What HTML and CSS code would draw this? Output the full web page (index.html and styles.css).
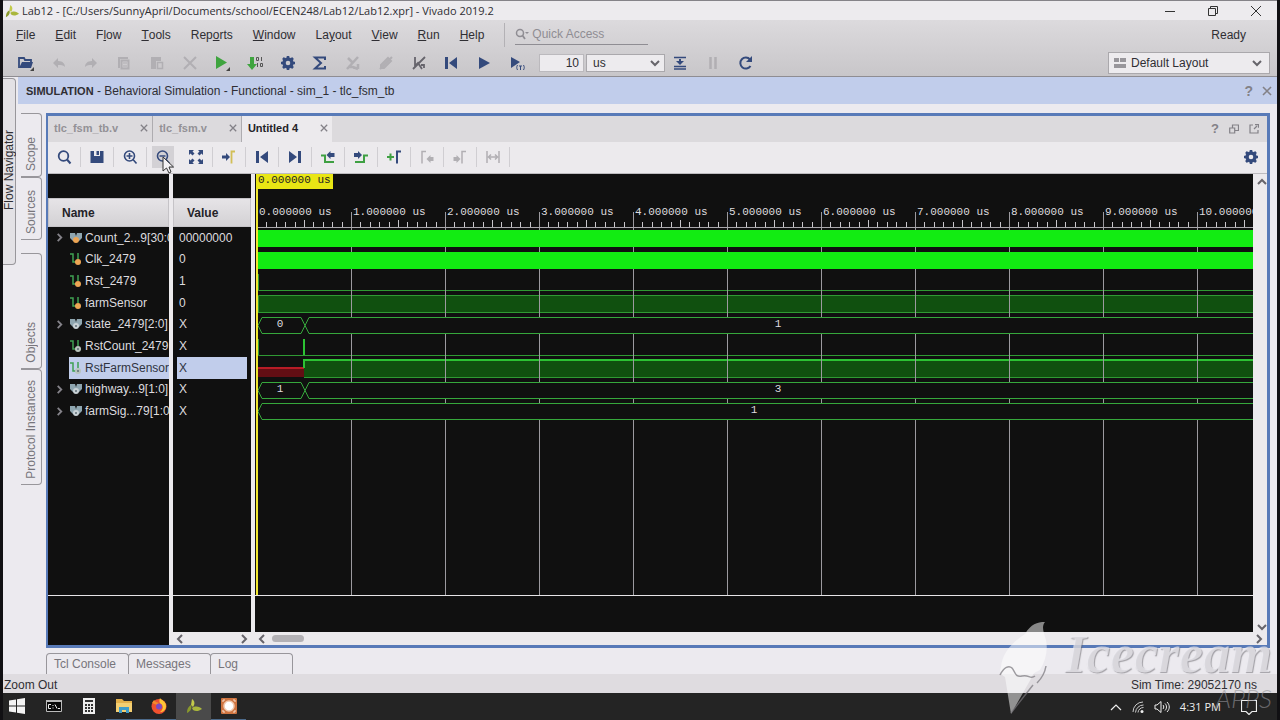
FILE: index.html
```html
<!DOCTYPE html>
<html lang="en">
<head>
    <meta charset="UTF-8">
    <meta name="viewport" content="width=device-width, initial-scale=1.0">
    <title>Lab12 - Vivado 2019.2</title>
    <link rel="stylesheet" href="styles.css">
</head>
<body>

    <!-- shared icons -->
    <svg class="defs" aria-hidden="true">
        <symbol id="vivado" viewBox="0 0 16 16">
            <path d="M6 1c3 2 3 5 1 8L5 7z" fill="#c3cb4a"/>
            <path d="M5 7c1 3 0 6-4 8 0-4 1-6 4-8z" fill="#8a9a2c"/>
            <path d="M6 10c4-3 8-1 10 1-3 2-6 3-9 1z" fill="#a9b63c"/>
        </symbol>
        <symbol id="chev-down" viewBox="0 0 10 10"><path d="M1 3l4 4 4-4" fill="none" stroke="currentColor" stroke-width="2"/></symbol>
        <symbol id="chev-up" viewBox="0 0 10 10"><path d="M1 7l4-4 4 4" fill="none" stroke="currentColor" stroke-width="2"/></symbol>
        <symbol id="chev-left" viewBox="0 0 10 10"><path d="M7 1L3 5l4 4" fill="none" stroke="currentColor" stroke-width="2"/></symbol>
        <symbol id="chev-right" viewBox="0 0 10 10"><path d="M3 1l4 4-4 4" fill="none" stroke="currentColor" stroke-width="2"/></symbol>
        <symbol id="close" viewBox="0 0 10 10"><path d="M1 1l8 8M9 1L1 9" fill="none" stroke="currentColor" stroke-width="1.6"/></symbol>
        <symbol id="gear" viewBox="0 0 16 16">
            <circle cx="8" cy="8" r="4" fill="none" stroke="currentColor" stroke-width="3.4"/>
            <path d="M8 1v3M8 12v3M1 8h3M12 8h3M3 3l2 2M11 11l2 2M13 3l-2 2M5 11l-2 2" stroke="currentColor" stroke-width="2.6"/>
        </symbol>
        <symbol id="bus-in" viewBox="0 0 12 12">
            <path d="M0 1h5l1 3 1-3h5v5L9 9H3L0 6z" fill="#8fa6b0"/>
            <circle cx="6" cy="8" r="3" fill="#eda554"/>
        </symbol>
        <symbol id="bus-reg" viewBox="0 0 12 12">
            <path d="M0 1h5l1 3 1-3h5v5L9 9H3L0 6z" fill="#8fa6b0"/>
            <circle cx="6" cy="8" r="3" fill="#c9d2d6"/><circle cx="6" cy="8" r="1" fill="#5d6c74"/>
        </symbol>
        <symbol id="wire-in" viewBox="0 0 12 12">
            <path d="M0 1h3v8h3M8 0v6" fill="none" stroke="#3fa052" stroke-width="1.5"/>
            <circle cx="8" cy="9" r="3" fill="#eda554"/>
        </symbol>
        <symbol id="wire-reg" viewBox="0 0 12 12">
            <path d="M0 1h3v8h3M8 0v6" fill="none" stroke="#3fa052" stroke-width="1.5"/>
            <circle cx="8" cy="9" r="3" fill="#b8c4bc"/><circle cx="8" cy="9" r="1" fill="#5d6c74"/>
        </symbol>
    </svg>

    <header class="titlebar">
        <svg class="logo"><use href="#vivado"/></svg>
        <span class="title">Lab12 - [C:/Users/SunnyApril/Documents/school/ECEN248/Lab12/Lab12.xpr] - Vivado 2019.2</span>
        <div class="window-buttons">
            <button aria-label="Minimize"><svg viewBox="0 0 10 10"><path d="M0 5.500h10" stroke="#333"/></svg></button>
            <button aria-label="Restore"><svg viewBox="0 0 10 10"><path d="M.5 2.500h7v7h-7zM2.500 2.500v-2h7v7h-2" fill="none" stroke="#333"/></svg></button>
            <button aria-label="Close"><svg viewBox="0 0 10 10"><path d="M0 0l10 10M10 0L0 10" stroke="#333"/></svg></button>
        </div>
    </header>

    <div class="top">
        <nav class="menu">
            <button><u>F</u>ile</button>
            <button><u>E</u>dit</button>
            <button>F<u>l</u>ow</button>
            <button><u>T</u>ools</button>
            <button>Rep<u>o</u>rts</button>
            <button><u>W</u>indow</button>
            <button>La<u>y</u>out</button>
            <button><u>V</u>iew</button>
            <button><u>R</u>un</button>
            <button><u>H</u>elp</button>
            <div class="quick">
                <label class="quick-box">
                    <svg class="quick-icon" viewBox="0 0 14 12"><circle cx="5" cy="5" r="3.500" fill="none" stroke="#8f8d93" stroke-width="1.500"/><path d="M7.500 7.500L10 11" stroke="#8f8d93" stroke-width="1.800"/><path d="M10 4h4l-2 2z" fill="#8f8d93"/></svg>
                    <input type="text" placeholder="Quick Access" aria-label="Quick Access">
                </label>
            </div>
            <span class="ready">Ready</span>
        </nav>

        <div class="toolbar">
            <div class="tools">
                <button aria-label="Open"><svg viewBox="0 0 16 16"><path d="M1 13V3h5l1 2h6v2" fill="none" stroke="currentColor" stroke-width="1.800"/><path d="M4 7h11l-2 6H1z" fill="currentColor"/><path d="M16 12v4h-4z" fill="#444"/></svg></button>
                <button class="off" aria-label="Undo"><svg viewBox="0 0 16 16"><path d="M7 3v3c5 0 7 3 7 6-2-2-4-2-7-2v3L2 8z" fill="currentColor"/></svg></button>
                <button class="off" aria-label="Redo"><svg viewBox="0 0 16 16"><path d="M9 3v3c-5 0-7 3-7 6 2-2 4-2 7-2v3l5-5z" fill="currentColor"/></svg></button>
                <button class="off" aria-label="Copy"><svg viewBox="0 0 16 16"><path d="M2 2h10v2H4v9H2z" fill="currentColor"/><path d="M5.500 5.500h7v8h-7z" fill="none" stroke="currentColor" stroke-width="2"/><path d="M7 8h4M7 11h4" stroke="currentColor"/></svg></button>
                <button class="off" aria-label="Paste"><svg viewBox="0 0 16 16"><path d="M2 2h10v4H7v8H2z" fill="currentColor"/><path d="M8.500 7.500h5v6h-5z" fill="none" stroke="currentColor" stroke-width="1.500"/></svg></button>
                <button class="off" aria-label="Delete"><svg viewBox="0 0 16 16"><path d="M2 2l12 12M14 2L2 14" stroke="currentColor" stroke-width="2"/></svg></button>
                <button aria-label="Run simulation"><svg viewBox="0 0 16 16"><path d="M2 1l11 6.500L2 14z" fill="#3fa43f"/><path d="M16 12v4h-4z" fill="#444"/></svg></button>
                <button aria-label="Generate bitstream"><svg viewBox="0 0 16 16"><path d="M3 2h4v7h3l-5 6-5-6h3z" fill="#3fa43f"/><path d="M9.500 2.500h2v3h-2zM14.500 2v4M10.500 8v4M13.500 8.500h2v3h-2z" fill="none" stroke="#555"/></svg></button>
                <button aria-label="Settings"><svg><use href="#gear"/></svg></button>
                <button aria-label="Report"><svg viewBox="0 0 16 16"><path d="M13 5V2.500H3L9 8l-6 5.500h10V11" fill="none" stroke="currentColor" stroke-width="2"/></svg></button>
                <button class="off" aria-label="Clear probes"><svg viewBox="0 0 16 16"><path d="M3 3l4 4M3 12h5l5 2M13 9v5M13 2L2 14" stroke="currentColor" stroke-width="2.500"/></svg></button>
                <button class="off" aria-label="Clear marks"><svg viewBox="0 0 16 16"><path d="M3 10l7-7 3 3-7 7H3zM14 2L2 14" fill="none" stroke="currentColor" stroke-width="2"/></svg></button>
                <button class="dim" aria-label="Cut selection"><svg viewBox="0 0 16 16"><path d="M4 2v9l3-3 4 6M14 2L2 14M10 10h3v3" fill="none" stroke="currentColor" stroke-width="1.800"/></svg></button>
                <button aria-label="Restart"><svg viewBox="0 0 16 16"><path d="M2 2h3v12H2zM14 2v12L6 8z" fill="currentColor"/></svg></button>
                <button aria-label="Run all"><svg viewBox="0 0 16 16"><path d="M3 2l11 6-11 6z" fill="currentColor"/></svg></button>
                <button aria-label="Run for time"><svg viewBox="0 0 16 16"><path d="M2 2l9 5-9 6z" fill="currentColor"/><path d="M8.500 10c-1 2-1 3 0 5M14.500 10c1 2 1 3 0 5M10 11h3M11.500 11v4" fill="none" stroke="currentColor"/></svg></button>
            </div>
            <input class="time" type="text" value="10" aria-label="Run time">
            <div class="select units">
                <select aria-label="Time unit"><option>us</option><option>ns</option></select>
                <svg><use href="#chev-down"/></svg>
            </div>
            <div class="tools run-tools">
                <button aria-label="Step"><svg viewBox="0 0 16 16"><path d="M2 2.500h12M2 11.500h12M2 14h12" stroke="currentColor" stroke-width="1.500"/><path d="M7 4h2v2h3L8 10 4 6h3z" fill="currentColor"/></svg></button>
                <button class="off" aria-label="Break"><svg viewBox="0 0 16 16"><path d="M5.500 2v12M10.500 2v12" stroke="currentColor" stroke-width="2.500"/></svg></button>
                <button aria-label="Relaunch"><svg viewBox="0 0 16 16"><path d="M12.500 11A5.500 5.500 0 1 1 12 4.500" fill="none" stroke="currentColor" stroke-width="2"/><path d="M14 1v6H8z" fill="currentColor"/></svg></button>
            </div>
            <div class="select layout">
                <svg class="layout-icon" viewBox="0 0 12 10"><path d="M0 0h5v4H0zM6 0h6v4H6zM0 6h12v4H0z" fill="#98969b"/></svg>
                <select aria-label="Layout"><option>Default Layout</option></select>
                <svg><use href="#chev-down"/></svg>
            </div>
        </div>
    </div>

    <div class="body">
        <div class="rail"><button class="side-tab flow-tab"><span>Flow Navigator</span></button></div>

        <main class="main">
            <div class="sim-bar">
                <span><b>SIMULATION</b> - Behavioral Simulation - Functional - sim_1 - tlc_fsm_tb</span>
                <div class="bar-buttons">
                    <button class="help" aria-label="Help">?</button>
                    <button aria-label="Close simulation"><svg><use href="#close"/></svg></button>
                </div>
            </div>

            <div class="work">
                <div class="side-tabs">
                    <button class="side-tab scope"><span>Scope</span></button>
                    <button class="side-tab sources"><span>Sources</span></button>
                    <button class="side-tab objects"><span>Objects</span></button>
                    <button class="side-tab protocol"><span>Protocol Instances</span></button>
                </div>

                <div class="center">
                    <section class="panel">
                        <div class="tabs">
                            <button class="tab">tlc_fsm_tb.v <svg><use href="#close"/></svg></button>
                            <button class="tab">tlc_fsm.v <svg><use href="#close"/></svg></button>
                            <button class="tab active">Untitled 4 <svg><use href="#close"/></svg></button>
                            <div class="tab-buttons">
                                <button class="help" aria-label="Help">?</button>
                                <button aria-label="Restore"><svg viewBox="0 0 10 10"><path d="M.7 4h5v5h-5zM3.500 4V1h6v5.500H6" fill="none" stroke="currentColor" stroke-width="1.200"/></svg></button>
                                <button aria-label="Float"><svg viewBox="0 0 10 10"><path d="M4 1H1v8h8V6M5 5l3-3M6 .7h3.500v3" fill="none" stroke="currentColor" stroke-width="1.200"/></svg></button>
                            </div>
                        </div>

                        <div class="wave-tools">
                            <button aria-label="Find"><svg viewBox="0 0 16 16"><circle cx="7.500" cy="7" r="4.800" fill="none" stroke="currentColor" stroke-width="1.800"/><path d="M11 10.500l3.500 4" stroke="currentColor" stroke-width="2"/></svg></button>
                            <button aria-label="Save"><svg viewBox="0 0 16 16"><path d="M1.500 2H5v5h6V2h3.500v12h-13z" fill="currentColor"/><path d="M7.500 2H10v4H7.500z" fill="currentColor"/></svg></button>
                            <button aria-label="Zoom In"><svg viewBox="0 0 16 16"><circle cx="7.500" cy="7" r="5" fill="none" stroke="currentColor" stroke-width="1.600"/><path d="M11 10.500l3.500 4M4.500 7h6M7.500 4v6" stroke="currentColor" stroke-width="1.600"/></svg></button>
                            <button aria-label="Zoom Out" class="hot">
                                <svg viewBox="0 0 16 16"><circle cx="7.500" cy="7" r="5" fill="none" stroke="currentColor" stroke-width="1.600"/><path d="M11 10.500l3.500 4M4.500 7h6" stroke="currentColor" stroke-width="1.600"/></svg>
                                <svg class="pointer" viewBox="0 0 12 18"><path d="M1 1v14l3.500-3 2.500 5 2-1-2-5h4.500z" fill="#f4f2f5" stroke="#333"/></svg>
                            </button>
                            <button aria-label="Zoom Fit"><svg viewBox="0 0 16 16"><path d="M1 1h5L4.500 2.500l2 2-2 2-2-2L1 6zM15 1v5l-1.500-1.500-2 2-2-2 2-2L10 1zM1 15v-5l1.500 1.500 2-2 2 2-2 2L6 15zM15 15h-5l1.500-1.500-2-2 2-2 2 2L15 10z" fill="currentColor"/></svg></button>
                            <button aria-label="Go to cursor"><svg viewBox="0 0 16 16"><path d="M1 6.500h4V4l4 4-4 4V9.500H1z" fill="currentColor"/><path d="M14 2.500h-3.500v12" fill="none" stroke="#d2bf57" stroke-width="1.800"/></svg></button>
                            <button aria-label="Go to start"><svg viewBox="0 0 16 16"><path d="M2 2h3v12H2zM14 2v12L6 8z" fill="currentColor"/></svg></button>
                            <button aria-label="Go to end"><svg viewBox="0 0 16 16"><path d="M11 2h3v12h-3zM2 2v12l8-6z" fill="currentColor"/></svg></button>
                            <button aria-label="Previous transition"><svg viewBox="0 0 16 16"><path d="M1 6.500h4v6.500h9" fill="none" stroke="#3fa043" stroke-width="2"/><path d="M14.500 4v4h-4v2L6.500 6l4-4v2z" fill="currentColor"/></svg></button>
                            <button aria-label="Next transition"><svg viewBox="0 0 16 16"><path d="M2 13h9V6.500h4" fill="none" stroke="#3fa043" stroke-width="2"/><path d="M1 4v4h4v2l4-4-4-4v2z" fill="currentColor"/></svg></button>
                            <button aria-label="Add marker"><svg viewBox="0 0 16 16"><path d="M1 8h7M4.500 4.500v7" stroke="#3fa043" stroke-width="2"/><path d="M15 2.500h-4v12" fill="none" stroke="currentColor" stroke-width="2"/></svg></button>
                            <button class="off" aria-label="Previous marker"><svg viewBox="0 0 16 16"><path d="M7 2.500H3v12" fill="none" stroke="currentColor" stroke-width="1.500"/><path d="M14.500 8v4h-3v2l-4-4 4-4v2z" fill="currentColor"/></svg></button>
                            <button class="off" aria-label="Next marker"><svg viewBox="0 0 16 16"><path d="M14 2.500h-4v12" fill="none" stroke="currentColor" stroke-width="1.500"/><path d="M1.500 8v4h3v2l4-4-4-4v2z" fill="currentColor"/></svg></button>
                            <button class="off" aria-label="Swap cursors"><svg viewBox="0 0 16 16"><path d="M2 2v12M14 2v12M3 8h10M6 5.500L3.500 8 6 10.500M10 5.500L12.500 8 10 10.500" fill="none" stroke="currentColor" stroke-width="1.500"/></svg></button>
                            <button class="wave-settings" aria-label="Waveform settings"><svg><use href="#gear"/></svg></button>
                        </div>

                        <div class="viewer">
                            <div class="col names">
                                <table>
                                    <thead><tr><th>Name</th></tr></thead>
                                    <tbody>
                                        <tr><td><svg class="arrow"><use href="#chev-right"/></svg><span class="sig"><svg><use href="#bus-in"/></svg>Count_2...9[30:0]</span></td></tr>
                                        <tr><td><span class="sig"><svg><use href="#wire-in"/></svg>Clk_2479</span></td></tr>
                                        <tr><td><span class="sig"><svg><use href="#wire-in"/></svg>Rst_2479</span></td></tr>
                                        <tr><td><span class="sig"><svg><use href="#wire-in"/></svg>farmSensor</span></td></tr>
                                        <tr><td><svg class="arrow"><use href="#chev-right"/></svg><span class="sig"><svg><use href="#bus-reg"/></svg>state_2479[2:0]</span></td></tr>
                                        <tr><td><span class="sig"><svg><use href="#wire-reg"/></svg>RstCount_2479</span></td></tr>
                                        <tr class="selected"><td><span class="sig"><svg><use href="#wire-reg"/></svg>RstFarmSensor</span></td></tr>
                                        <tr><td><svg class="arrow"><use href="#chev-right"/></svg><span class="sig"><svg><use href="#bus-reg"/></svg>highway...9[1:0]</span></td></tr>
                                        <tr><td><svg class="arrow"><use href="#chev-right"/></svg><span class="sig"><svg><use href="#bus-reg"/></svg>farmSig...79[1:0]</span></td></tr>
                                    </tbody>
                                </table>
                                <div class="filler"></div>
                                <div class="foot"></div>
                            </div>

                            <div class="col values">
                                <table>
                                    <thead><tr><th>Value</th></tr></thead>
                                    <tbody>
                                        <tr><td>00000000</td></tr>
                                        <tr><td>0</td></tr>
                                        <tr><td>1</td></tr>
                                        <tr><td>0</td></tr>
                                        <tr><td>X</td></tr>
                                        <tr><td>X</td></tr>
                                        <tr class="selected"><td>X</td></tr>
                                        <tr><td>X</td></tr>
                                        <tr><td>X</td></tr>
                                    </tbody>
                                </table>
                                <div class="filler"></div>
                                <div class="foot"></div>
                                <div class="hscroll"><svg><use href="#chev-left"/></svg><svg class="last"><use href="#chev-right"/></svg></div>
                            </div>

                            <div class="col wave">
                                <!-- 94 units of x are one microsecond, time zero is at x=2 -->
                                <svg class="canvas">
                                    <defs>
                                        <pattern id="grid" x="2" y="0" width="94" height="2000" patternUnits="userSpaceOnUse">
                                            <path d="M.5 38v2000" stroke="#9c9a9f"/>
                                            <path d="M9.500 48v6M19.500 48v6M28.500 48v6M38.500 48v6M47.500 46v8M56.500 48v6M66.500 48v6M75.500 48v6M85.500 48v6" stroke="#c9c7cc"/>
                                        </pattern>
                                    </defs>

                                    <rect x="2" y="38" width="100%" height="100%" fill="url(#grid)"/>
                                    <rect x="2" y="53" width="100%" height="1" fill="#aaa8ad"/>

                                    <g class="ruler">
                                        <text x="4" y="41">0.000000 us</text>
                                        <text x="98" y="41">1.000000 us</text>
                                        <text x="192" y="41">2.000000 us</text>
                                        <text x="286" y="41">3.000000 us</text>
                                        <text x="380" y="41">4.000000 us</text>
                                        <text x="474" y="41">5.000000 us</text>
                                        <text x="568" y="41">6.000000 us</text>
                                        <text x="662" y="41">7.000000 us</text>
                                        <text x="756" y="41">8.000000 us</text>
                                        <text x="850" y="41">9.000000 us</text>
                                        <text x="944" y="41">10.000000 us</text>
                                    </g>

                                    <!-- Count, Clk -->
                                    <rect class="clock" x="3" y="56" width="100%" height="17"/>
                                    <rect class="clock" x="3" y="78" width="100%" height="17"/>
                                    <!-- Rst -->
                                    <path class="line" d="M3.500 100v16.500H4000"/>
                                    <!-- farmSensor -->
                                    <rect class="high" x="3" y="122" width="100%" height="16"/>
                                    <path class="line" d="M3.500 138.500v-17H4000M3 138.500H4000"/>
                                    <!-- state -->
                                    <path class="bus" d="M3 151.500l4-8h39l4 8-4 8H7zM4000 143.500H54l-4 8 4 8H4000"/>
                                    <text class="val" x="25" y="153">0</text>
                                    <text class="val" x="52.4%" y="153">1</text>
                                    <!-- RstCount -->
                                    <path class="line" d="M3.500 165v16.500H4000"/>
                                    <path class="edge" d="M49 165v16"/>
                                    <!-- RstFarmSensor -->
                                    <rect x="3" y="193" width="46" height="10" fill="#620e14"/>
                                    <rect x="3" y="193" width="46" height="2" fill="#b71c26"/>
                                    <rect class="high" x="49" y="186" width="100%" height="17"/>
                                    <path class="line" d="M49 203.500H4000"/>
                                    <path class="edge" d="M49 194v-8H4000"/>
                                    <!-- highway, farmSig -->
                                    <path class="bus" d="M3 216.500l4-8h39l4 8-4 8H7zM4000 208.500H54l-4 8 4 8H4000"/>
                                    <text class="val" x="25" y="218">1</text>
                                    <text class="val" x="52.4%" y="218">3</text>
                                    <path class="bus" d="M4000 229.500H7l-4 8 4 8H4000"/>
                                    <text class="val" x="50%" y="239">1</text>

                                    <!-- gridlines run over the filled levels -->
                                    <rect x="2" y="96" width="100%" height="47" fill="url(#grid)"/>
                                    <rect x="2" y="160" width="100%" height="48" fill="url(#grid)"/>

                                    <!-- main cursor -->
                                    <rect x="1" y="0" width="2" height="100%" fill="#f1e62f"/>
                                    <rect x="1" y="0" width="77" height="15" fill="#e9e614"/>
                                    <text class="flag" x="3" y="9">0.000000 us</text>
                                </svg>
                                <div class="foot"></div>
                                <div class="hscroll">
                                    <svg><use href="#chev-left"/></svg>
                                    <span class="thumb"></span>
                                    <svg class="last"><use href="#chev-right"/></svg>
                                </div>
                            </div>
                            <div class="vscroll"><svg><use href="#chev-up"/></svg><svg><use href="#chev-down"/></svg></div>
                        </div>
                    </section>

                    <div class="bottom-tabs">
                        <button>Tcl Console</button>
                        <button>Messages</button>
                        <button>Log</button>
                    </div>
                </div>
            </div>
        </main>
    </div>

    <div class="status"><span>Zoom Out</span><span class="sim-time">Sim Time: 29052170 ns</span></div>

    <footer class="taskbar">
        <button aria-label="Start"><svg viewBox="0 0 16 16"><path d="M0 2.500l7-1v6H0zM8 1.300L16 0v7.500H8zM0 8.500h7v6l-7-1zM8 8.500h8V16l-8-1.300z" fill="#f3f3f3"/></svg></button>
        <button aria-label="Command Prompt"><svg viewBox="0 0 16 16"><path d="M.5 2.500h15v11H.5z" fill="#090909" stroke="#bbb"/><path d="M0 2h16v2H0z" fill="#bbb"/><path d="M5 6.500H2.500v4H5M7 7v1M7 9.500v1M9 6.500l2 4M12 10.500h2" fill="none" stroke="#eee"/></svg></button>
        <button aria-label="Calculator"><svg viewBox="0 0 16 16"><path d="M2 0h12v16H2z" fill="#eee"/><path d="M4 2h8v2H4z" fill="#333"/><path d="M4 7h8M4 10h8M4 13h8" stroke="#333" stroke-width="1.800" stroke-dasharray="2 1"/></svg></button>
        <button class="open" aria-label="File Explorer"><svg viewBox="0 0 16 16"><path d="M0 1h6l2 2h8v11H0z" fill="#e3b04b"/><path d="M0 5h16v9H0z" fill="#f4cf72"/><path d="M3 15V9h10v6h-3v-3H6v3z" fill="#3f9cc9"/></svg></button>
        <button class="open" aria-label="Firefox"><svg viewBox="0 0 16 16"><circle cx="8" cy="8.500" r="7.500" fill="#f0512e"/><path d="M9 0c1 2 6 3 6 8 0 4-3 6-6 6 3-2 4-6 1-8-2-1-2-4-1-6z" fill="#fbc536"/><path d="M1 5l2-3 2 2 3 1-2 2z" fill="#f58a2b"/><circle cx="8" cy="8.500" r="3" fill="#7d4bc0"/></svg></button>
        <button class="current" aria-label="Vivado"><svg><use href="#vivado"/></svg></button>
        <button class="open" aria-label="Screen Recorder"><svg viewBox="0 0 16 16"><rect width="16" height="16" rx="1" fill="#cf7440"/><circle cx="8" cy="8" r="5" fill="#fff" stroke="#f0c9b0" stroke-width="1.500"/><path d="M2 4V2h2M12 2h2v2M14 12v2h-2M4 14H2v-2" fill="none" stroke="#f5dccb"/></svg></button>
        <div class="tray">
            <svg viewBox="0 0 12 12"><path d="M1 9l5-5 5 5" fill="none" stroke="#eee" stroke-width="1.200"/></svg>
            <svg viewBox="0 0 12 12"><path d="M1 11A10 10 0 0 1 11 1M3.500 11.500A8 8 0 0 1 11.500 4M6 11.500A5.500 5.500 0 0 1 11.500 6.500" fill="none" stroke="#ccc"/><circle cx="10" cy="10.500" r="1.500" fill="#eee"/></svg>
            <svg class="volume" viewBox="0 0 16 12"><path d="M1 4h2l4-3.500v11L3 8H1zM9 4c1 1 1 3 0 4M11 2.500c2 2 2 5 0 7M13 1c3 3 3 7 0 10" fill="none" stroke="#eee"/></svg>
            <time>4:31 PM</time>
            <svg class="notes" viewBox="0 0 16 16"><path d="M.5 1.500h15v11H11l-3 3-3-3H.5z" fill="none" stroke="#eee" stroke-width="1.200"/></svg>
        </div>
    </footer>

    <div class="watermark">
        <svg viewBox="0 0 48 92"><path d="M26 12C32 2 38 0 46 0c-4 5-1 11 1 18 2 10 0 20-6 30-4 2-7 3-8 7L12 92 6 55c-4-2-6-5-4-10 1-13 10-24 24-33z" fill="#fff" fill-opacity=".5"/><path d="M1 53c4-8 9-10 12-7s3 10 10 8 8 4 13 0M38 61c5-5 8-11 9-17M34 63L12 91" fill="none" stroke="#77757a" stroke-opacity=".7" stroke-width="1.500"/></svg>
        <span class="brand">Icecream</span>
        <span class="apps">APPS</span>
    </div>

</body>
</html>
```

FILE: styles.css
```css
* {
    box-sizing: border-box;
}

body {
    display: flex;
    flex-direction: column;
    height: 100vh;
    margin: 0;
    padding: 0 3px;
    overflow: hidden;
    background: #111013;
    color: #2f2e33;
    font-family: "Liberation Sans", Arial, sans-serif;
    font-size: 12px;
    line-height: 16px;
}

button {
    display: flex;
    align-items: center;
    justify-content: center;
    padding: 0;
    border: none;
    background: none;
    color: inherit;
    font: inherit;
    white-space: nowrap;
}

input, select {
    min-width: 0;
    padding: 0;
    border: none;
    background: none;
    color: inherit;
    font: inherit;
    appearance: none;
}

svg {
    display: block;
    flex: none;
}

.defs {
    display: none;
}

/* Title bar */
.titlebar {
    display: flex;
    align-items: center;
    height: 20px;
    padding-left: 2px;
    border-top: 1px solid #858388;
    background: #edebee;
    font-family: "Open Sans", "Noto Sans", sans-serif;
    font-size: 11px;
}

.logo {
    width: 14px;
    height: 14px;
    margin-right: 3px;
}

.window-buttons {
    display: flex;
    margin-left: auto;
}

.window-buttons button {
    width: 43px;
    height: 16px;
}

.window-buttons svg {
    width: 10px;
    height: 10px;
}

/* Menu and main toolbar */
.top {
    border-bottom: 1px solid #8f8d92;
    background: linear-gradient(#dcdadd, #c8c6c9);
}

.menu {
    display: flex;
    align-items: center;
    gap: 20px;
    height: 30px;
    padding: 0 31px 0 13px;
}

.quick {
    height: 24px;
    padding-left: 10px;
    border-left: 1px solid #b3b1b5;
}

.quick-box {
    display: flex;
    align-items: center;
    gap: 3px;
    width: 133px;
    height: 22px;
    border-bottom: 1px solid #8f8d93;
}

.quick-icon {
    width: 14px;
    height: 12px;
}

.quick input {
    width: 100px;
}

.quick input::placeholder {
    color: #8f8d93;
    opacity: 1;
}

.ready {
    margin-left: auto;
}

.toolbar {
    display: flex;
    align-items: center;
    height: 26px;
    padding: 0 7px 0 11px;
}

.tools {
    display: flex;
    justify-content: space-between;
    width: 515px;
    color: #344a7c;
}

.tools button {
    width: 24px;
    height: 24px;
}

.tools svg {
    width: 16px;
    height: 16px;
}

.tools .off {
    color: #b1afb3;
}

.tools .dim {
    color: #66646c;
}

.time {
    width: 45px;
    height: 18px;
    margin-left: 10px;
    padding: 0 4px;
    border: 1px solid #bbb9bd;
    background: #edebee;
    text-align: right;
}

.select {
    display: flex;
    align-items: center;
    border: 1px solid #aaa8ac;
    background: #edebee;
}

.select select {
    flex: 1;
}

.select svg {
    width: 10px;
    height: 10px;
    color: #66646a;
}

.units {
    width: 79px;
    height: 18px;
    margin-left: 2px;
    padding: 0 4px 0 6px;
}

.run-tools {
    width: 90px;
    margin-left: 3px;
}

.layout {
    gap: 5px;
    width: 162px;
    height: 22px;
    margin-left: auto;
    padding: 0 7px 0 5px;
}

.select .layout-icon {
    width: 12px;
}

/* Body */
.body {
    display: flex;
    flex: 1;
    min-height: 0;
    background: #eceaef;
}

.rail {
    width: 15px;
    padding-top: 1px;
}

.side-tab {
    align-items: flex-end;
    padding-bottom: 5px;
    border: 1px solid #98969b;
    border-left: none;
    border-radius: 0 4px 4px 0;
    color: #77757b;
}

.side-tab span {
    writing-mode: vertical-rl;
    transform: rotate(180deg);
}

.flow-tab {
    width: 13px;
    height: 187px;
    padding-bottom: 54px;
    background: #e3e1e5;
    color: #2f2e33;
}

.main {
    display: flex;
    flex: 1;
    flex-direction: column;
    min-width: 0;
}

.sim-bar {
    display: flex;
    align-items: center;
    justify-content: space-between;
    height: 27px;
    padding: 0 5px 0 8px;
    background: #c1cdeb;
}

.sim-bar b {
    font-size: 11px;
}

.bar-buttons, .tab-buttons {
    display: flex;
    align-items: center;
    gap: 9px;
    color: #838187;
}

.bar-buttons svg, .tab-buttons svg {
    width: 10px;
    height: 10px;
}

.help {
    font-size: 14px;
    font-weight: bold;
}

.work {
    display: flex;
    flex: 1;
    min-height: 0;
    padding: 9px 7px 0 3px;
}

.side-tabs {
    display: flex;
    flex-direction: column;
    width: 25px;
}

.side-tabs .side-tab {
    width: 21px;
}

.scope {
    height: 64px;
}

.sources {
    height: 63px;
    margin-bottom: 13px;
}

.objects {
    height: 116px;
}

.protocol {
    height: 116px;
}

.center {
    display: flex;
    flex: 1;
    flex-direction: column;
    min-width: 0;
}

.panel {
    display: flex;
    flex: 1;
    flex-direction: column;
    min-height: 0;
    border: 3px solid #587ab8;
    border-left-width: 2px;
}

/* File tabs */
.tabs {
    display: flex;
    height: 26px;
    background: #dcdadd;
}

.tab {
    gap: 22px;
    padding: 0 4px 2px 6px;
    border-right: 1px solid #aeacb0;
    color: #939196;
    font-size: 11px;
    font-weight: bold;
}

.tab svg {
    width: 8px;
    height: 8px;
    color: #838187;
}

.tab.active {
    border: none;
    background: #eceaed;
    color: #242328;
}

.tab-buttons {
    gap: 10px;
    margin-left: auto;
    padding-right: 8px;
}

.tab-buttons .help {
    font-size: 13px;
}

/* Wave toolbar */
.wave-tools {
    display: flex;
    align-items: center;
    height: 32px;
    padding-bottom: 2px;
    border-bottom: 1px solid #bdbbbf;
    background: #eceaed;
    color: #344a7c;
}

.wave-tools button {
    position: relative;
    width: 33px;
    height: 20px;
    border-right: 1px solid #d0ced2;
}

.wave-tools svg {
    width: 16px;
    height: 16px;
}

.wave-tools .off {
    color: #b1afb3;
}

.wave-tools .hot {
    height: 22px;
    border: 5px solid transparent;
    border-width: 0 6px 0 5px;
    background: #d3d1d5;
    background-clip: padding-box;
    box-shadow: inset 0 0 0 0 #aaa8ad;
}

.wave-tools .pointer {
    position: absolute;
    top: 10px;
    left: 10px;
    width: 12px;
    height: 18px;
    z-index: 1;
}

.wave-tools .wave-settings {
    margin-left: auto;
    border: none;
}

/* Waveform viewer */
.viewer {
    display: flex;
    flex: 1;
    gap: 4px;
    min-height: 0;
    background: #eceaed;
}

.col {
    display: flex;
    flex-direction: column;
    background: #101010;
    color: #dddbdf;
}

.names {
    width: 121px;
    overflow: hidden;
}

.values {
    width: 78px;
}

table, thead, th, td {
    display: block;
    padding: 0;
}

thead {
    padding-top: 24px;
}

tr {
    display: block;
}

th {
    height: 29px;
    padding-left: 13px;
    border: 1px solid #c5c3c7;
    background: linear-gradient(#e6e4e7, #d3d1d4);
    color: #242328;
    line-height: 28px;
    text-align: left;
}

tbody {
    display: grid;
    grid-template-rows: repeat(9, 1fr);
    height: 195px;
}

td {
    display: flex;
    align-items: center;
    height: 100%;
    white-space: nowrap;
}

.names td {
    justify-content: flex-end;
    padding-left: 7px;
}

.arrow {
    width: 9px;
    height: 9px;
    color: #85838a;
}

.sig {
    display: flex;
    flex: none;
    align-items: center;
    gap: 3px;
    width: 100px;
    height: 100%;
    margin-left: auto;
    padding-left: 1px;
}

.sig svg {
    width: 12px;
    height: 12px;
}

.values td {
    margin: 0 4px;
    padding-left: 2px;
}

.selected .sig, .values .selected td {
    background: #c1cdeb;
    color: #30343f;
}

.filler {
    flex: 1;
    border-bottom: 1px solid #e6e4e7;
}

.foot {
    height: 36px;
}

.names .foot {
    height: 49px;
}

.hscroll {
    display: flex;
    align-items: center;
    gap: 5px;
    height: 13px;
    padding: 0 2px;
    background: #eceaed;
    color: #66646a;
}

.hscroll svg, .vscroll svg {
    width: 10px;
    height: 10px;
}

.hscroll .last {
    margin-left: auto;
}

.thumb {
    width: 32px;
    height: 7px;
    border-radius: 4px;
    background: #b3b1b5;
}

.wave {
    flex: 1;
    min-width: 0;
}

/* the scrollbar reaches under the vertical one */
.wave .hscroll {
    margin-right: -13px;
}

.canvas {
    flex: 1;
    width: 100%;
    min-height: 0;
    border-bottom: 1px solid #e6e4e7;
    font-family: "Liberation Mono", monospace;
    font-size: 11px;
}

.ruler, .val {
    fill: #dddbdf;
}

.val {
    text-anchor: middle;
}

.flag {
    fill: #222;
}

.clock {
    fill: #12ec12;
}

.high {
    fill: #10500f;
}

.line {
    fill: none;
    stroke: #2f9a33;
}

.edge {
    fill: none;
    stroke: #2cc233;
    stroke-width: 2;
}

.bus {
    fill: #101010;
    stroke: #36a83c;
}

.vscroll {
    display: flex;
    flex-direction: column;
    align-items: flex-end;
    justify-content: space-between;
    width: 14px;
    margin-left: -4px;
    padding: 3px 0 13px;
    color: #66646a;
}

/* Bottom tabs and status */
.bottom-tabs {
    display: flex;
    height: 26px;
    padding-top: 5px;
}

.bottom-tabs button {
    justify-content: flex-start;
    width: 83px;
    margin-right: -1px;
    padding-left: 7px;
    border: 1px solid #98969b;
    border-bottom: none;
    border-radius: 4px 4px 0 0;
    color: #77757b;
}

.status {
    display: flex;
    align-items: center;
    justify-content: space-between;
    height: 19px;
    padding: 2px 20px 0 1px;
    background: #dfdce0;
}

/* Taskbar */
.taskbar {
    display: flex;
    height: 27px;
    background: #242424;
}

.taskbar button {
    width: 35px;
    border-bottom: 1px solid transparent;
}

.taskbar button:first-child {
    width: 33px;
    padding-right: 5px;
}

.taskbar button svg {
    width: 16px;
    height: 16px;
}

.taskbar .open {
    border-color: #4c6a8a;
}

.taskbar .current {
    background: #4a4a4a;
}

.tray {
    display: flex;
    align-items: center;
    gap: 10px;
    margin-left: auto;
    padding-right: 20px;
    color: #eeeeee;
    font-family: "Open Sans", "Noto Sans", sans-serif;
    font-size: 11px;
}

.tray svg {
    width: 12px;
    height: 12px;
}

.tray .volume, .tray .notes {
    width: 16px;
}

.tray .notes {
    height: 16px;
    margin-left: 10px;
}

/* Recorder watermark over the corner */
.watermark {
    position: absolute;
    right: 8px;
    bottom: 6px;
    display: flex;
    gap: 18px;
    color: rgba(240, 238, 243, 0.7);
    pointer-events: none;
}

.watermark svg {
    width: 48px;
    height: 92px;
}

.brand {
    font-family: "Liberation Serif", serif;
    font-size: 54px;
    font-style: italic;
    font-weight: bold;
    line-height: 64px;
    text-shadow: 1px 1px 1px rgba(90, 88, 94, 0.5);
}

.apps {
    position: absolute;
    right: 0;
    bottom: 0;
    color: rgba(150, 148, 154, 0.6);
    font-family: Lato, sans-serif;
    font-size: 26px;
    font-style: italic;
    font-weight: 300;
    line-height: 32px;
}
```
